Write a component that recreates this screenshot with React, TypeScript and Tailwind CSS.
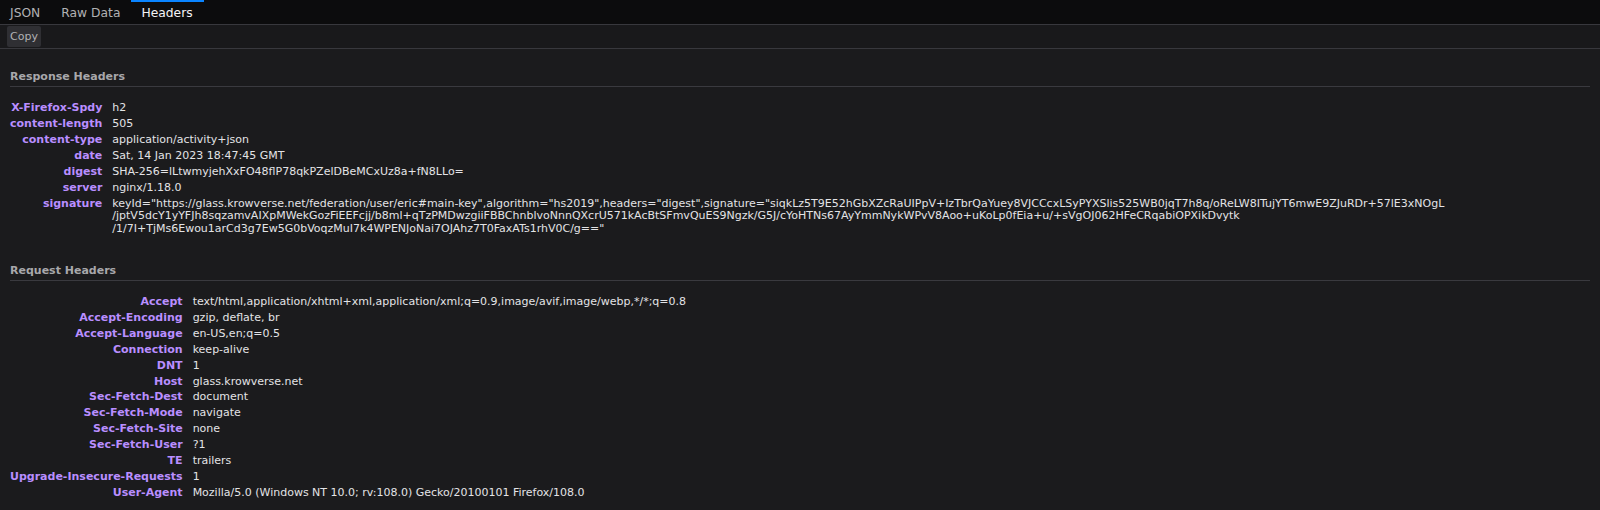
import React from "react";

type Header = { name: string; value: string | string[] };

const responseHeaders: Header[] = [
  { name: "X-Firefox-Spdy", value: "h2" },
  { name: "content-length", value: "505" },
  { name: "content-type", value: "application/activity+json" },
  { name: "date", value: "Sat, 14 Jan 2023 18:47:45 GMT" },
  { name: "digest", value: "SHA-256=lLtwmyjehXxFO48flP78qkPZelDBeMCxUz8a+fN8LLo=" },
  { name: "server", value: "nginx/1.18.0" },
  {
    name: "signature",
    value: [
      'keyId="https://glass.krowverse.net/federation/user/eric#main-key",algorithm="hs2019",headers="digest",signature="siqkLz5T9E52hGbXZcRaUIPpV+IzTbrQaYuey8VJCCcxLSyPYXSlis525WB0jqT7h8q/oReLW8ITujYT6mwE9ZJuRDr+57lE3xNOgL',
      "/jptV5dcY1yYFJh8sqzamvAIXpMWekGozFiEEFcjj/b8ml+qTzPMDwzgiiFBBChnblvoNnnQXcrU571kAcBtSFmvQuES9Ngzk/G5J/cYoHTNs67AyYmmNykWPvV8Aoo+uKoLp0fEia+u/+sVgOJ062HFeCRqabiOPXikDvytk",
      '/1/7I+TjMs6Ewou1arCd3g7Ew5G0bVoqzMuI7k4WPENJoNai7OJAhz7T0FaxATs1rhV0C/g=="',
    ],
  },
];

const requestHeaders: Header[] = [
  { name: "Accept", value: "text/html,application/xhtml+xml,application/xml;q=0.9,image/avif,image/webp,*/*;q=0.8" },
  { name: "Accept-Encoding", value: "gzip, deflate, br" },
  { name: "Accept-Language", value: "en-US,en;q=0.5" },
  { name: "Connection", value: "keep-alive" },
  { name: "DNT", value: "1" },
  { name: "Host", value: "glass.krowverse.net" },
  { name: "Sec-Fetch-Dest", value: "document" },
  { name: "Sec-Fetch-Mode", value: "navigate" },
  { name: "Sec-Fetch-Site", value: "none" },
  { name: "Sec-Fetch-User", value: "?1" },
  { name: "TE", value: "trailers" },
  { name: "Upgrade-Insecure-Requests", value: "1" },
  { name: "User-Agent", value: "Mozilla/5.0 (Windows NT 10.0; rv:108.0) Gecko/20100101 Firefox/108.0" },
];

function HeaderSection({ title, headers, className }: { title: string; headers: Header[]; className?: string }) {
  return (
    <div className={className}>
      <div className="border-b border-[#3a3a3f] pb-[3px] text-[11px] font-bold leading-[13px] text-[#a8a8ab]">
        {title}
      </div>
      <div className="mt-[13px] grid grid-cols-[max-content_1fr] gap-x-[10px] text-[11px] leading-[12.6px]">
        {headers.map((h) => (
          <React.Fragment key={h.name}>
            <div className="whitespace-nowrap py-[1.7px] text-right font-bold text-[#b98eff]">{h.name}</div>
            <div className="py-[1.7px] text-[#e3e3e6]">
              {Array.isArray(h.value)
                ? h.value.map((line, i) => (
                    <div key={i} className="whitespace-nowrap">
                      {line}
                    </div>
                  ))
                : <span className="whitespace-nowrap">{h.value}</span>}
            </div>
          </React.Fragment>
        ))}
      </div>
    </div>
  );
}

export default function App() {
  const tabs = ["JSON", "Raw Data", "Headers"];

  return (
    <div
      className="min-h-[510px] w-full bg-[#1b1b1d]"
      style={{ fontFamily: '"DejaVu Sans", sans-serif' }}
    >
      {/* Tab bar */}
      <div className="flex h-[25px] border-b border-[#38383d] bg-[#0c0c0d]">
        {tabs.map((t) => {
          const active = t === "Headers";
          return (
            <div
              key={t}
              className={`flex h-[24px] items-center border-t-2 pl-[10px] pr-[11px] text-[12.3px] ${
                active ? "border-[#0a84ff] text-[#f4f4f6]" : "border-transparent text-[#b1b1b3]"
              }`}
            >
              {t}
            </div>
          );
        })}
      </div>

      {/* Toolbar */}
      <div className="flex h-[24px] items-end border-b border-[#38383d] bg-[#19191b] px-[7px] pb-px">
        <button className="flex h-[21px] items-center rounded-[2px] bg-[#2f2f33] px-[3px] pt-[2px] text-[11px] text-[#b1b1b3]">
          Copy
        </button>
      </div>

      {/* Body */}
      <div className="px-[10px] pb-4">
        <HeaderSection className="pt-[21px]" title="Response Headers" headers={responseHeaders} />
        <HeaderSection className="pt-[27px]" title="Request Headers" headers={requestHeaders} />
      </div>
    </div>
  );
}
